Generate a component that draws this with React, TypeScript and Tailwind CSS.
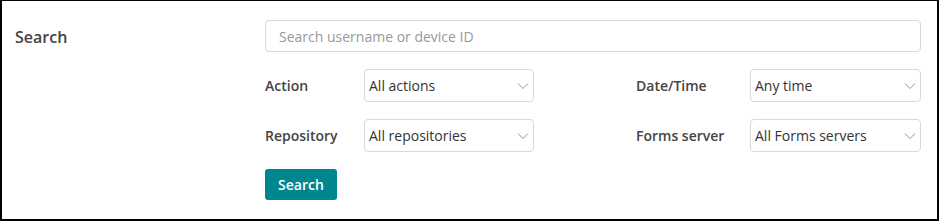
import React from 'react';

const Chevron = () => (
  <svg className="pointer-events-none absolute right-[5px] top-1/2 -translate-y-1/2" width="12" height="8" viewBox="0 0 12 8" fill="none">
    <path d="M1 1.5l5 5 5-5" stroke="#888" strokeWidth="0.9" />
  </svg>
);

const Select = ({ value, width }: { value: string; width: string }) => (
  <div className={`relative ${width} h-[33px]`}>
    <div className="h-full w-full rounded-[4px] border border-[#d9d9d9] bg-white pl-[4px] flex items-center text-[14px] text-[#333]">
      {value}
    </div>
    <Chevron />
  </div>
);

const Field = ({ label, labelWidth, value, width }: { label: string; labelWidth: string; value: string; width: string }) => (
  <div className="flex items-center">
    <div className={`${labelWidth} text-[14px] font-semibold text-[#444]`}>{label}</div>
    <Select value={value} width={width} />
  </div>
);

const App: React.FC = () => {
  return (
    <div
      className="w-[939px] h-[221px] border-t border-l-2 border-r-2 border-b-2 border-black bg-white"
      style={{ fontFamily: '"Open Sans", sans-serif' }}
    >
      <div className="flex pt-[19px]">
        <div className="w-[263px] pl-[13px] pt-[5px] text-[16px] font-semibold text-[#444]">Search</div>
        <div className="flex flex-col">
          <div className="w-[656px] h-[32px] rounded-[4px] border border-[#d9d9d9] flex items-center pl-[13px] text-[14px] text-[#999]">
            Search username or device ID
          </div>
          <div className="mt-[17px] flex">
            <div className="flex flex-col gap-[17px] w-[371px]">
              <Field label="Action" labelWidth="w-[99px]" value="All actions" width="w-[170px]" />
              <Field label="Repository" labelWidth="w-[99px]" value="All repositories" width="w-[170px]" />
            </div>
            <div className="flex flex-col gap-[17px]">
              <Field label="Date/Time" labelWidth="w-[114px]" value="Any time" width="w-[171px]" />
              <Field label="Forms server" labelWidth="w-[114px]" value="All Forms servers" width="w-[171px]" />
            </div>
          </div>
          <div className="mt-[17px]">
            <button className="h-[31px] px-[13px] rounded-[3px] bg-[#00868f] text-white text-[14px] font-semibold">
              Search
            </button>
          </div>
        </div>
      </div>
    </div>
  );
};

export default App;
